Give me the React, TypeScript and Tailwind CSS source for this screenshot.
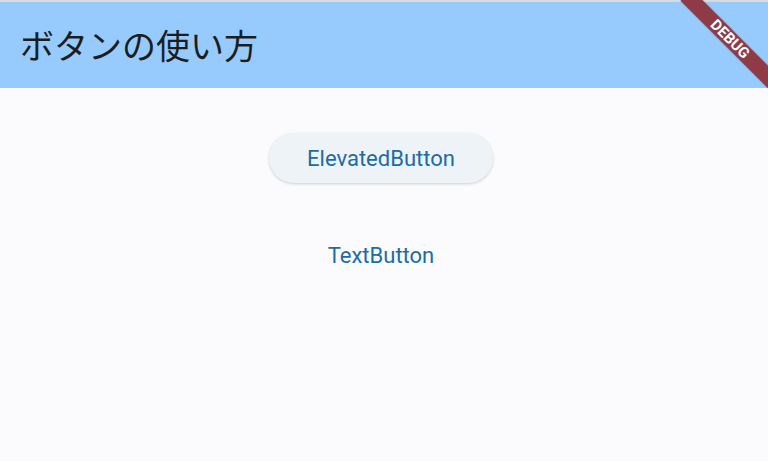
export default function App() {
  return (
    <div className="relative h-[461px] w-[768px] overflow-hidden bg-[#fbfbfe] font-['Roboto','Noto_Sans_CJK_JP',sans-serif]">
      {/* app bar */}
      <div className="border-t-2 border-[#d6dbe0] bg-[#97cbfe]">
        <div className="flex h-[86px] items-center pl-[20px]">
          <h1 className="font-['Noto_Sans_CJK_JP',sans-serif] text-[34px] font-normal leading-none text-[#1c1d21]">
            ボタンの使い方
          </h1>
        </div>
      </div>

      {/* body */}
      <div className="flex flex-col items-center pr-[6px] pt-[45px]">
        <button className="h-[50px] w-[224px] rounded-full bg-[#eef3f8] text-[22px] text-[#1b6ca6] shadow-[0_1px_3px_rgba(0,0,0,0.18)]">
          ElevatedButton
        </button>
        <button className="mt-[47px] h-[50px] px-5 text-[22px] text-[#1b6ca6]">TextButton</button>
      </div>

      {/* debug banner */}
      <div className="absolute left-[668px] top-[31px] flex h-[16px] w-[124px] rotate-45 items-center justify-center bg-[#8f3b47] shadow-[0_0_2px_rgba(0,0,0,0.3)]">
        <span className="font-['Roboto',sans-serif] text-[15px] font-bold leading-none text-white">DEBUG</span>
      </div>
    </div>
  );
}
